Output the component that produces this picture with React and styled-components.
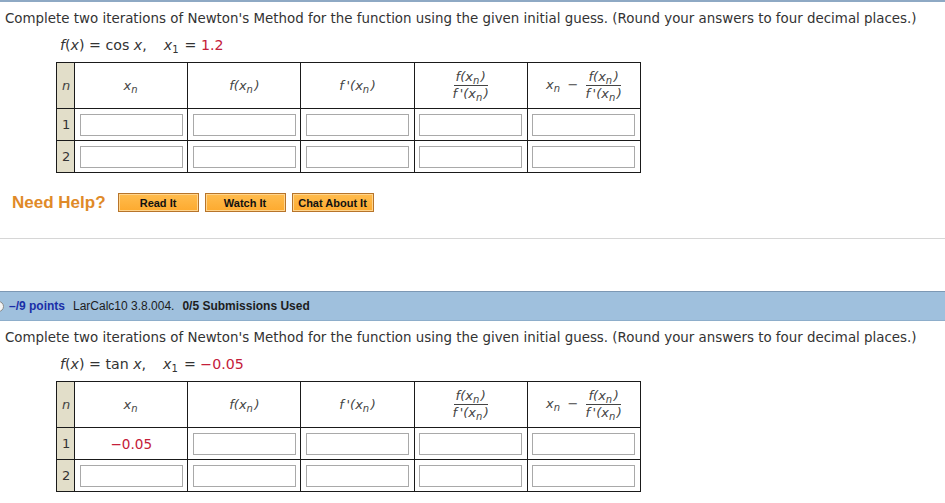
import React from "react";
import styled, { createGlobalStyle } from "styled-components";

const GlobalStyle = createGlobalStyle`
  html, body {
    margin: 0;
    padding: 0;
    background: #fff;
    font-family: "DejaVu Sans", Verdana, sans-serif;
    color: #333;
  }
`;

const Page = styled.div`
  width: 945px;
  height: 503px;
  overflow: hidden;
  border-top: 2px solid #8ea9c4;
  box-sizing: border-box;
`;

const Question = styled.div`
  padding-top: 8px;
`;

const Prompt = styled.p`
  margin: 0;
  padding-left: 5px;
  font-size: 13.4px;
  line-height: 18px;
  color: #333;
  white-space: nowrap;
`;

const Formula = styled.p`
  margin: 8px 0 0;
  padding-left: 60px;
  font-size: 14.2px;
  line-height: 18px;
  color: #333;
  white-space: nowrap;

  .gap {
    display: inline-block;
    width: 17px;
  }
`;

const Given = styled.span`
  color: #c4203a;
`;

const Sub = styled.sub`
  font-size: 10px;
  vertical-align: -3px;
  line-height: 0;
  margin-right: 1.5px;
`;

const Var = styled.i`
  font-style: italic;
`;

const Grid = styled.table`
  margin: 8px 0 0 56px;
  border-collapse: collapse;
  table-layout: fixed;
  width: 585px;
  font-size: 13px;
  color: #444;

  td, th {
    border: 1px solid #1a1a1a;
    padding: 0;
    text-align: center;
  }
`;

const HeadCell = styled.th`
  height: 46px;
  font-weight: normal;
  font-style: italic;
  width: ${(p) => (p.$narrow ? "18px" : "112px")};
  background: ${(p) => (p.$narrow ? "#e2dec9" : "#fff")};
  text-align: ${(p) => (p.$narrow ? "left" : "center")} !important;
  padding-left: ${(p) => (p.$narrow ? "5px" : "0")} !important;
  box-sizing: border-box;
`;

const IndexCell = styled.td`
  height: 31px;
  background: #e2dec9;
  text-align: left !important;
  padding-left: 5px !important;
  color: #333;
  font-size: 13px;
`;

const Cell = styled.td`
  height: 31px;
`;

const AnswerBox = styled.input`
  display: block;
  width: 103px;
  height: 22px;
  margin: 0 auto;
  box-sizing: border-box;
  border: 1px solid #a9a9a9;
  background: #fff;
`;

const GivenValue = styled.span`
  color: #c4203a;
  font-size: 13.6px;
`;

const Frac = styled.span`
  display: inline-flex;
  flex-direction: column;
  align-items: center;
  vertical-align: middle;
  line-height: 14px;

  .num {
    border-bottom: 1px solid #444;
    padding: 0 2px 1px;
  }
  .den {
    padding-top: 1px;
  }
`;

const Minus = styled.span`
  font-style: normal;
  margin: 0 7px 0 6px;
`;

const HelpRow = styled.div`
  display: flex;
  align-items: center;
  gap: 6px;
  margin-top: 20px;
  padding-left: 12px;
  height: 19px;
`;

const HelpLabel = styled.span`
  font-family: "Liberation Sans", Arial, sans-serif;
  font-weight: bold;
  font-size: 17px;
  color: #e08a28;
  margin-right: 6px;
`;

const HelpButton = styled.button`
  width: ${(p) => p.$w || 81}px;
  height: 19px;
  padding: 0;
  font-family: "Liberation Sans", Arial, sans-serif;
  font-weight: bold;
  font-size: 11px;
  color: #111;
  background: linear-gradient(#ffbc4e, #fdaa2f);
  border: 1px solid #b7742a;
  box-shadow: inset 0 0 0 1px #ffd58e;
`;

const Divider = styled.hr`
  margin: 26px 0 0;
  border: 0;
  border-top: 1px solid #d6d6d6;
`;

const PointsBar = styled.div`
  margin-top: 52px;
  height: 28px;
  display: flex;
  align-items: center;
  background: #9fc0dd;
  border-top: 1px solid #7c98b4;
  border-bottom: 1px solid #8eaecb;
  font-family: "Liberation Sans", Arial, sans-serif;
  font-size: 12px;
  color: #1d1d1d;
  white-space: nowrap;
`;

const Bullet = styled.span`
  width: 11px;
  height: 11px;
  border-radius: 50%;
  background: #f4f4f4;
  border: 1px solid #8a8a8a;
  margin-left: -7px;
  margin-right: 5px;
  box-sizing: border-box;
`;

const Points = styled.b`
  color: #1a2fa8;
  margin-right: 8px;
`;

const Source = styled.span`
  margin-right: 8px;
`;

function FracFX() {
  return (
    <Frac>
      <span className="num">
        f(x<Sub>n</Sub>)
      </span>
      <span className="den">
        f&thinsp;'(x<Sub>n</Sub>)
      </span>
    </Frac>
  );
}

function NewtonTable({ first }) {
  return (
    <Grid>
      <thead>
        <tr>
          <HeadCell $narrow>n</HeadCell>
          <HeadCell>
            x<Sub>n</Sub>
          </HeadCell>
          <HeadCell>
            f(x<Sub>n</Sub>)
          </HeadCell>
          <HeadCell>
            f&thinsp;'(x<Sub>n</Sub>)
          </HeadCell>
          <HeadCell>
            <FracFX />
          </HeadCell>
          <HeadCell>
            x<Sub>n</Sub>
            <Minus>−</Minus>
            <FracFX />
          </HeadCell>
        </tr>
      </thead>
      <tbody>
        {[1, 2].map((n) => (
          <tr key={n}>
            <IndexCell>{n}</IndexCell>
            {[0, 1, 2, 3, 4].map((c) => (
              <Cell key={c}>
                {n === 1 && c === 0 && first ? (
                  <GivenValue>{first}</GivenValue>
                ) : (
                  <AnswerBox />
                )}
              </Cell>
            ))}
          </tr>
        ))}
      </tbody>
    </Grid>
  );
}

function NewtonQuestion({ fn, x1, showFirst }) {
  return (
    <Question>
      <Prompt>
        Complete two iterations of Newton's Method for the function using the
        given initial guess. (Round your answers to four decimal places.)
      </Prompt>
      <Formula>
        <Var>f</Var>(<Var>x</Var>) = {fn} <Var>x</Var>,<span className="gap" />
        <Var>x</Var>
        <Sub>1</Sub> = <Given>{x1}</Given>
      </Formula>
      <NewtonTable first={showFirst ? x1 : null} />
    </Question>
  );
}

export default function App() {
  return (
    <Page>
      <GlobalStyle />
      <NewtonQuestion fn="cos" x1="1.2" />
      <HelpRow>
        <HelpLabel>Need Help?</HelpLabel>
        <HelpButton>Read It</HelpButton>
        <HelpButton>Watch It</HelpButton>
        <HelpButton $w={82}>Chat About It</HelpButton>
      </HelpRow>
      <Divider />
      <PointsBar>
        <Bullet />
        <Points>–/9 points</Points>
        <Source>LarCalc10 3.8.004.</Source>
        <b>0/5 Submissions Used</b>
      </PointsBar>
      <NewtonQuestion fn="tan" x1="−0.05" showFirst />
    </Page>
  );
}
